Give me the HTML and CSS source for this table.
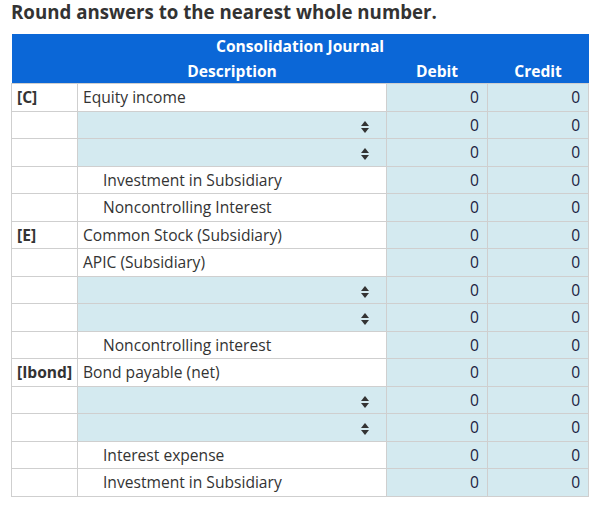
FILE: index.html
```html
<!DOCTYPE html>
<html>
<head>
<meta charset="utf-8">
<link rel="stylesheet" href="styles.css">
</head>
<body>
<h1 class="title">Round answers to the nearest whole number.</h1>
<table class="journal">
  <colgroup>
    <col class="c-key">
    <col class="c-desc">
    <col class="c-amt">
    <col class="c-amt">
  </colgroup>
  <thead>
    <tr><th colspan="4" class="h-top">Consolidation Journal</th></tr>
    <tr><th></th><th>Description</th><th>Debit</th><th>Credit</th></tr>
  </thead>
  <tbody>
    <tr><td class="key">[C]</td><td class="desc">Equity income</td><td class="amt">0</td><td class="amt">0</td></tr>
    <tr><td class="key"></td><td class="desc sel"><span class="spin"></span></td><td class="amt">0</td><td class="amt">0</td></tr>
    <tr><td class="key"></td><td class="desc sel"><span class="spin"></span></td><td class="amt">0</td><td class="amt">0</td></tr>
    <tr><td class="key"></td><td class="desc ind">Investment in Subsidiary</td><td class="amt">0</td><td class="amt">0</td></tr>
    <tr><td class="key"></td><td class="desc ind">Noncontrolling Interest</td><td class="amt">0</td><td class="amt">0</td></tr>
    <tr><td class="key">[E]</td><td class="desc">Common Stock (Subsidiary)</td><td class="amt">0</td><td class="amt">0</td></tr>
    <tr><td class="key"></td><td class="desc">APIC (Subsidiary)</td><td class="amt">0</td><td class="amt">0</td></tr>
    <tr><td class="key"></td><td class="desc sel"><span class="spin"></span></td><td class="amt">0</td><td class="amt">0</td></tr>
    <tr><td class="key"></td><td class="desc sel"><span class="spin"></span></td><td class="amt">0</td><td class="amt">0</td></tr>
    <tr><td class="key"></td><td class="desc ind">Noncontrolling interest</td><td class="amt">0</td><td class="amt">0</td></tr>
    <tr><td class="key">[Ibond]</td><td class="desc">Bond payable (net)</td><td class="amt">0</td><td class="amt">0</td></tr>
    <tr><td class="key"></td><td class="desc sel"><span class="spin"></span></td><td class="amt">0</td><td class="amt">0</td></tr>
    <tr><td class="key"></td><td class="desc sel"><span class="spin"></span></td><td class="amt">0</td><td class="amt">0</td></tr>
    <tr><td class="key"></td><td class="desc ind">Interest expense</td><td class="amt">0</td><td class="amt">0</td></tr>
    <tr><td class="key"></td><td class="desc ind">Investment in Subsidiary</td><td class="amt">0</td><td class="amt">0</td></tr>
  </tbody>
</table>
</body>
</html>
```
FILE: styles.css
```css
html, body {
  margin: 0;
  padding: 0;
  background: #fff;
}
body {
  padding: 0 11px;
  font-family: "Open Sans", "DejaVu Sans", sans-serif;
  color: #333;
}
.title {
  margin: 0;
  padding-top: 0;
  height: 34px;
  font-size: 18.7px;
  font-weight: 700;
  line-height: 24px;
  color: #333;
}
.journal {
  width: 578px;
  border-collapse: collapse;
  table-layout: fixed;
  font-size: 15.6px;
}
.c-key { width: 66px; }
.c-desc { width: 309px; }
.c-amt { width: 101px; }
.journal thead th {
  background: #0b67d7;
  color: #fff;
  font-weight: 700;
  text-align: center;
  padding: 0 0 1px 0;
  height: 23px;
  line-height: 22px;
  vertical-align: bottom;
}
.journal thead th.h-top {
  height: 23px;
  padding: 0 0 2px 0;
  line-height: 22px;
  vertical-align: middle;
}
.journal td {
  border: 1px solid #cfcfcf;
  height: 26.5px;
  padding: 0;
  line-height: 20px;
  vertical-align: middle;
}
.key {
  font-weight: 700;
  padding-left: 5px !important;
  background: #fff;
}
.desc {
  padding-left: 5px !important;
  background: #fff;
}
.desc.ind {
  padding-left: 25px !important;
}
.desc.sel {
  background: #d4eaf0;
  text-align: right;
  padding-right: 16px !important;
}
.amt {
  background: #d4eaf0;
  text-align: right;
  padding-right: 8px !important;
  color: #1b2240;
}
.spin {
  display: inline-block;
  position: relative;
  width: 9px;
  height: 12px;
  vertical-align: middle;
}
.spin::before,
.spin::after {
  content: "";
  position: absolute;
  left: 0;
  border-left: 4.5px solid transparent;
  border-right: 4.5px solid transparent;
}
.spin::before {
  top: 0;
  border-bottom: 5px solid #333;
}
.spin::after {
  bottom: 0;
  border-top: 5px solid #333;
}
```
